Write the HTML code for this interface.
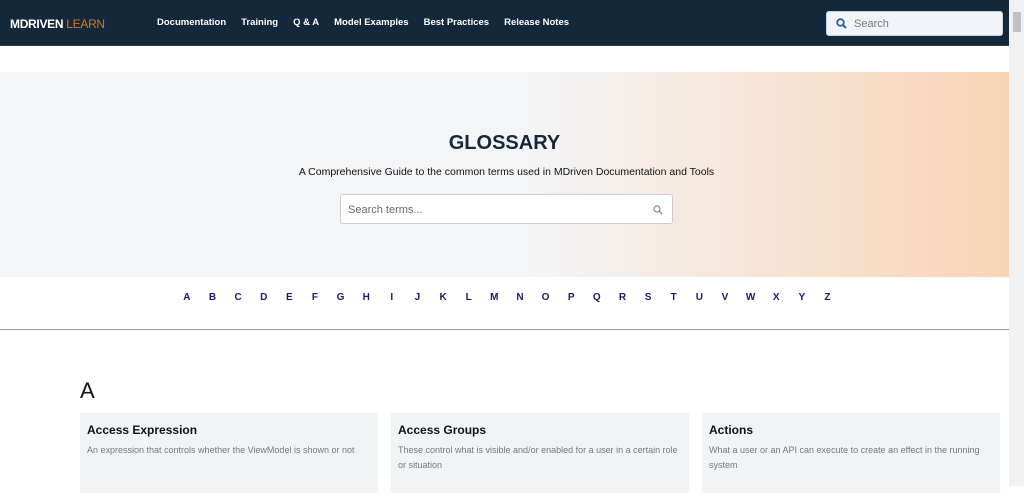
<!DOCTYPE html>
<html><head><style>
*{margin:0;padding:0;box-sizing:border-box}
body{width:1024px;height:486px;overflow:hidden;font-family:"Liberation Sans",sans-serif;background:#fff;position:relative}
.nav{position:absolute;left:0;top:0;width:1009px;height:46px;background:#13283b;border-bottom:1px solid #2a3b4c}
.logo{position:absolute;left:10px;top:17px;font-weight:bold;font-size:12px;color:#fff;letter-spacing:-0.3px}
.logo span{color:#d4751c;font-weight:normal}
.links{position:absolute;left:157px;top:17px;font-size:9.5px;color:#fff;font-weight:bold;white-space:nowrap}
.links span{margin-right:15px}
.search{position:absolute;left:826px;top:11px;width:177px;height:25px;background:#f1f4f8;border-radius:3px;border:1px solid #c9d2dc}
.search svg{position:absolute;left:9px;top:6px}
.search div{position:absolute;left:27px;top:6px;font-size:11px;color:#777}
.sb{position:absolute;left:1009px;top:0;width:15px;height:486px;background:#f1f1f1}
.sb div{position:absolute;left:4px;top:12px;width:8px;height:20px;background:#c1c1c1}
.hero{position:absolute;left:0;top:72px;width:1009px;height:205px;background:linear-gradient(90deg,#f4f5f7 0%,#f4f5f7 52%,#f6e1cf 80%,#f8d4b5 100%)}
h1{position:absolute;left:0;width:1009px;top:132px;text-align:center;font-size:20px;color:#13283b}
.sub{position:absolute;left:0;width:1013px;top:166px;text-align:center;font-size:10.5px;color:#111}
.tsearch{position:absolute;left:340px;top:194px;width:333px;height:30px;background:#fff;border:1px solid #ccc;border-radius:3px}
.tsearch div{position:absolute;left:7px;top:9px;font-size:11px;color:#666}
.tsearch svg{position:absolute;right:9px;top:10px}
.letters{position:absolute;left:174px;top:292px;font-size:10px;font-weight:bold;color:#1a1a6e;white-space:nowrap}
.letters span{display:inline-block;width:25.64px;text-align:center}
.hr{position:absolute;left:0;top:329px;width:1009px;height:1px;background:#999}
.A{position:absolute;left:80px;top:378px;font-size:22px;color:#111}
.card{position:absolute;top:413px;width:298px;height:80px;background:#f1f4f7}
.card h3{font-size:12px;color:#111;margin:10px 0 0 7px}
.card p{font-size:9px;color:#777;margin:6px 7px 0 7px;line-height:15px}
</style></head><body>
<div class="nav"><div class="logo">MDRIVEN <span>LEARN</span></div>
<div class="links"><span>Documentation</span><span>Training</span><span>Q &amp; A</span><span>Model Examples</span><span>Best Practices</span><span>Release Notes</span></div>
<div class="search"><svg width="11" height="11" viewBox="0 0 11 11"><circle cx="4.5" cy="4.5" r="3.3" fill="none" stroke="#2760a8" stroke-width="1.8"/><path d="M7 7l3 3" stroke="#2760a8" stroke-width="2"/></svg><div>Search</div></div></div>
<div class="sb"><div></div></div>
<div class="hero"></div>
<h1>GLOSSARY</h1>
<div class="sub">A Comprehensive Guide to the common terms used in MDriven Documentation and Tools</div>
<div class="tsearch"><div>Search terms...</div><svg width="10" height="10" viewBox="0 0 10 10"><circle cx="4" cy="4" r="3" fill="none" stroke="#888" stroke-width="1.2"/><path d="M6.3 6.3l3 3" stroke="#888" stroke-width="1.3"/></svg></div>
<div class="letters"><span>A</span><span>B</span><span>C</span><span>D</span><span>E</span><span>F</span><span>G</span><span>H</span><span>I</span><span>J</span><span>K</span><span>L</span><span>M</span><span>N</span><span>O</span><span>P</span><span>Q</span><span>R</span><span>S</span><span>T</span><span>U</span><span>V</span><span>W</span><span>X</span><span>Y</span><span>Z</span></div>
<div class="hr"></div>
<div class="A">A</div>
<div class="card" style="left:80px"><h3>Access Expression</h3><p>An expression that controls whether the ViewModel is shown or not</p></div>
<div class="card" style="left:391px"><h3>Access Groups</h3><p>These control what is visible and/or enabled for a user in a certain role or situation</p></div>
<div class="card" style="left:702px"><h3>Actions</h3><p>What a user or an API can execute to create an effect in the running system</p></div>
</body></html>
